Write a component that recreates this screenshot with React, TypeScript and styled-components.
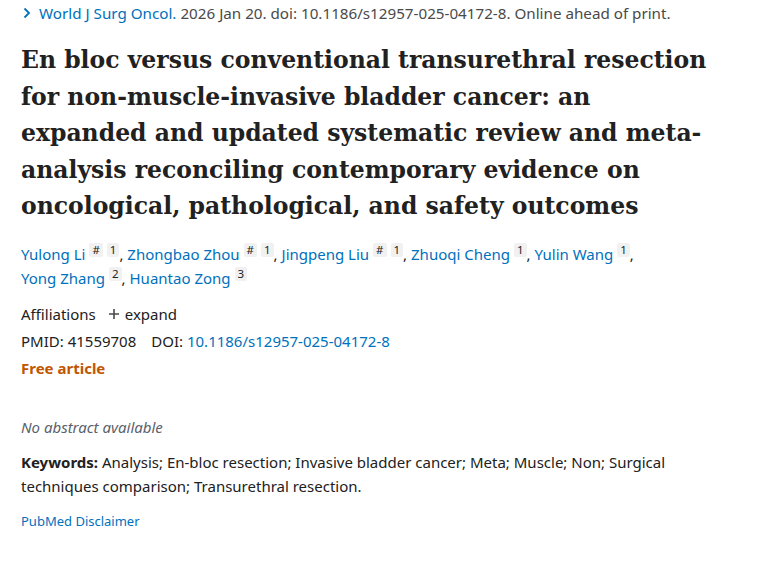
import * as React from 'react';
import styled, { createGlobalStyle } from 'styled-components';

const GlobalStyle = createGlobalStyle`
    html, body {
        margin: 0;
        padding: 0;
        background: #ffffff;
    }
    body {
        font-family: "Noto Sans", "Open Sans", Arial, sans-serif;
        color: #212121;
    }
`;

const authors = [
    { name: 'Yulong Li', equal: true, aff: '1' },
    { name: 'Zhongbao Zhou', equal: true, aff: '1' },
    { name: 'Jingpeng Liu', equal: true, aff: '1' },
    { name: 'Zhuoqi Cheng', equal: false, aff: '1' },
    { name: 'Yulin Wang', equal: false, aff: '1' },
    { name: 'Yong Zhang', equal: false, aff: '2' },
    { name: 'Huantao Zong', equal: false, aff: '3' },
];

const Chevron = () => (
    <svg width="10" height="12" viewBox="0 0 10 12" aria-hidden="true">
        <path d="M2.5 1.5 L7 6 L2.5 10.5" fill="none" stroke="#0071bc" strokeWidth="1.8" />
    </svg>
);

const Plus = () => (
    <svg width="12" height="12" viewBox="0 0 12 12" aria-hidden="true">
        <path d="M6 1 V11 M1 6 H11" stroke="#4a4a4a" strokeWidth="1.6" />
    </svg>
);

const App = () => {
    return (
        <>
            <GlobalStyle />
            <Page>
                <Citation>
                    <Chevron />
                    <Journal>World J Surg Oncol.</Journal>
                    <span>2026 Jan 20. doi: 10.1186/s12957-025-04172-8. Online ahead of print.</span>
                </Citation>

                <Title>
                    En bloc versus conventional transurethral resection for non-muscle-invasive bladder cancer: an
                    expanded and updated systematic review and meta-analysis reconciling contemporary evidence on
                    oncological, pathological, and safety outcomes
                </Title>

                <Authors>
                    {authors.map((a, i) => (
                        <React.Fragment key={a.name}>
                            <AuthorItem>
                                <Author>{a.name}</Author>
                                {a.equal && <Sup>#</Sup>}
                                <Sup>{a.aff}</Sup>
                                {i < authors.length - 1 && ','}
                            </AuthorItem>{' '}
                        </React.Fragment>
                    ))}
                </Authors>

                <Meta>
                    <Row>
                        Affiliations
                        <Expand><Plus /> expand</Expand>
                    </Row>
                    <Row>
                        PMID: 41559708
                        <Doi>DOI: <Link>10.1186/s12957-025-04172-8</Link></Doi>
                    </Row>
                    <Free>Free article</Free>
                </Meta>

                <NoAbstract>No abstract available</NoAbstract>

                <Keywords>
                    <strong>Keywords:</strong> Analysis; En-bloc resection; Invasive bladder cancer; Meta; Muscle; Non; Surgical
                    techniques comparison; Transurethral resection.
                </Keywords>

                <Disclaimer>PubMed Disclaimer</Disclaimer>
            </Page>
        </>
    );
};

const Page = styled.div`
    width: 680px;
    padding: 3px 0 0 21px;
`;

const Citation = styled.div`
    display: flex;
    align-items: center;
    gap: 7px;
    font-size: 15.2px;
    line-height: 20px;
    color: #4a4a4a;
    white-space: nowrap;

    svg {
        margin-left: 1px;
    }
`;

const Journal = styled.span`
    color: #0071bc;
    margin-right: -3px;
`;

const Title = styled.h1`
    font-family: "DejaVu Serif", Georgia, serif;
    font-size: 23.5px;
    font-weight: 700;
    line-height: 36.5px;
    color: #212121;
    margin: 19px 0 0;
    width: 692px;
`;

const Authors = styled.div`
    margin-top: 17px;
    font-size: 15px;
    line-height: 24px;
    color: #212121;
`;

const AuthorItem = styled.span`
    white-space: nowrap;
`;

const Author = styled.a`
    color: #0071bc;
    text-decoration: none;
`;

const Sup = styled.sup`
    display: inline-block;
    font-size: 11.5px;
    line-height: 14px;
    padding: 0 3px;
    margin-left: 4px;
    background: #f1f1f1;
    border-radius: 2px;
    color: #212121;
    vertical-align: 6px;
`;

const Meta = styled.div`
    margin-top: 11px;
    font-size: 15px;
    line-height: 27px;
`;

const Row = styled.div`
    display: flex;
    align-items: center;
`;

const Expand = styled.span`
    display: inline-flex;
    align-items: center;
    gap: 5px;
    margin-left: 12px;
`;

const Doi = styled.span`
    margin-left: 15px;
`;

const Link = styled.a`
    color: #0071bc;
    text-decoration: none;
`;

const Free = styled.div`
    color: #c05600;
    font-weight: 700;
`;

const NoAbstract = styled.div`
    margin-top: 35px;
    font-size: 15px;
    font-style: italic;
    color: #5b616b;
`;

const Keywords = styled.div`
    margin-top: 13px;
    font-size: 15px;
    line-height: 24px;
`;

const Disclaimer = styled.a`
    display: block;
    margin-top: 14px;
    font-size: 13px;
    color: #0071bc;
    text-decoration: none;
`;

export default App;
